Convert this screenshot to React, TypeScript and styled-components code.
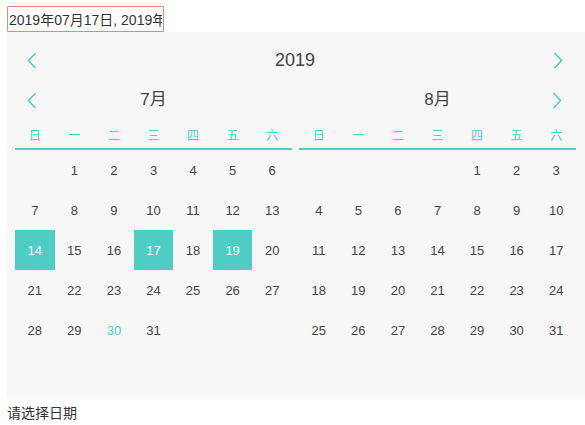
import React from "react";
import styled, { createGlobalStyle } from "styled-components";

const GlobalStyle = createGlobalStyle`
  html, body {
    margin: 0;
    overflow: hidden;
  }
  body {
    padding: 6px 7px;
    font-family: "Liberation Sans", "Noto Sans CJK SC", sans-serif;
    color: #333;
    background: #fff;
  }
`;

const teal = "#4ecdc4";

const WEEKDAYS = ["日", "一", "二", "三", "四", "五", "六"];

interface MonthData {
  label: string;
  offset: number;
  days: number;
}

const MONTHS: MonthData[] = [
  { label: "7月", offset: 1, days: 31 },
  { label: "8月", offset: 4, days: 31 },
];

const SELECTED = [14, 17, 19];
const TODAY = 30;

const Chevron = ({ dir }: { dir: "left" | "right" }) => (
  <svg width="10" height="17" viewBox="0 0 10 17">
    <path
      d={dir === "left" ? "M8.5 1 L1.5 8.5 L8.5 16" : "M1.5 1 L8.5 8.5 L1.5 16"}
      fill="none"
      stroke={teal}
      strokeWidth="1.6"
    />
  </svg>
);

const Month = ({ month, index }: { month: MonthData; index: number }) => {
  const cells: (number | null)[] = [];
  for (let i = 0; i < month.offset; i++) cells.push(null);
  for (let d = 1; d <= month.days; d++) cells.push(d);
  while (cells.length < 42) cells.push(null);
  const first = index === 0;

  return (
    <MonthBlock>
      <MonthHeader>
        <NavSlot side="left">{first && <Chevron dir="left" />}</NavSlot>
        <MonthTitle>{month.label}</MonthTitle>
        <NavSlot side="right">{!first && <Chevron dir="right" />}</NavSlot>
      </MonthHeader>
      <WeekRow>
        {WEEKDAYS.map((w) => (
          <WeekDay key={w}>{w}</WeekDay>
        ))}
      </WeekRow>
      <DayGrid>
        {cells.map((d, i) => (
          <Day
            key={i}
            selected={first && d !== null && SELECTED.includes(d)}
            today={first && d === TODAY}
          >
            {d ?? ""}
          </Day>
        ))}
      </DayGrid>
    </MonthBlock>
  );
};

const App = () => {
  return (
    <>
      <GlobalStyle />
      <DateInput readOnly value="2019年07月17日, 2019年07月19日, 2019年07月14日" />
      <Panel>
        <YearHeader>
          <Chevron dir="left" />
          <YearTitle>2019</YearTitle>
          <Chevron dir="right" />
        </YearHeader>
        <Months>
          {MONTHS.map((m, i) => (
            <Month key={m.label} month={m} index={i} />
          ))}
        </Months>
      </Panel>
      <Hint>请选择日期</Hint>
    </>
  );
};

const DateInput = styled.input`
  display: block;
  box-sizing: border-box;
  width: 157px;
  height: 26px;
  margin: 0;
  padding: 1px 1px;
  border: 1px solid #d98e74;
  border-radius: 1px;
  outline: none;
  font-family: "Liberation Sans", "Noto Sans CJK SC", sans-serif;
  font-size: 14px;
  color: #333;
  background: #fff;
`;

const Panel = styled.div`
  box-sizing: border-box;
  width: 578px;
  height: 366px;
  padding: 8px 8px 8px 8px;
  background: #f7f7f7;
`;

const YearHeader = styled.div`
  display: flex;
  align-items: center;
  justify-content: space-between;
  height: 40px;
  padding: 0 14px 0 12px;
`;

const YearTitle = styled.div`
  font-size: 18px;
  color: #444;
`;

const Months = styled.div`
  display: grid;
  grid-template-columns: 277px 277px;
  column-gap: 7px;
`;

const MonthBlock = styled.div`
  display: flex;
  flex-direction: column;
`;

const MonthHeader = styled.div`
  display: grid;
  grid-template-columns: 40px 1fr 40px;
  align-items: center;
  height: 40px;
`;

const NavSlot = styled.div<{ side: "left" | "right" }>`
  display: flex;
  justify-content: ${(p) => (p.side === "left" ? "flex-start" : "flex-end")};
  padding: ${(p) => (p.side === "left" ? "0 0 0 12px" : "0 14px 0 0")};
  height: 17px;
`;

const MonthTitle = styled.div`
  text-align: center;
  font-size: 17px;
  line-height: 20px;
  padding-bottom: 1px;
  color: #444;
`;

const WeekRow = styled.div`
  display: grid;
  grid-template-columns: repeat(7, 1fr);
  height: 28px;
  border-bottom: 2px solid ${teal};
`;

const WeekDay = styled.div`
  display: flex;
  align-items: center;
  justify-content: center;
  font-size: 12px;
  color: ${teal};
`;

const DayGrid = styled.div`
  display: grid;
  grid-template-columns: repeat(7, 1fr);
  grid-auto-rows: 40px;
`;

const Day = styled.div<{ selected?: boolean; today?: boolean }>`
  display: flex;
  align-items: center;
  justify-content: center;
  font-size: 13px;
  color: ${(p) => (p.selected ? "#fff" : p.today ? teal : "#444")};
  background: ${(p) => (p.selected ? teal : "transparent")};
`;

const Hint = styled.div`
  margin-top: 5px;
  font-size: 14px;
  line-height: 20px;
  color: #333;
`;

export default App;
